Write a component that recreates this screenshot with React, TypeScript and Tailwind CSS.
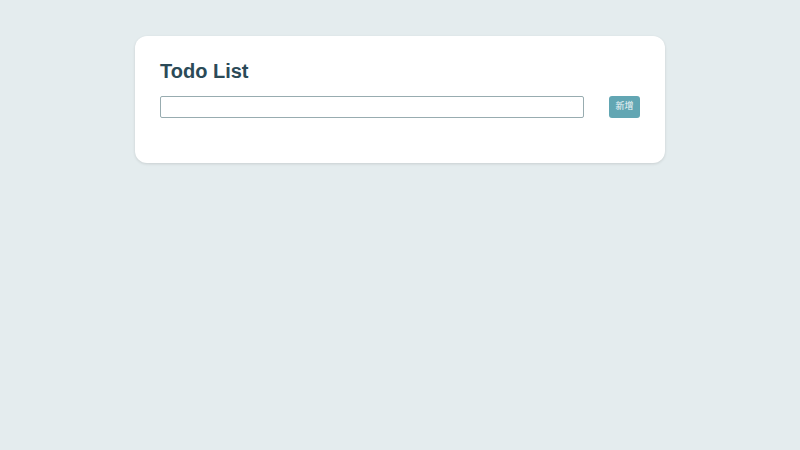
import React, { useState } from 'react';

const App: React.FC = () => {
  const [text, setText] = useState('');
  const [todos, setTodos] = useState<string[]>([]);

  const addTodo = () => {
    if (!text.trim()) return;
    setTodos((prev) => [...prev, text.trim()]);
    setText('');
  };

  return (
    <div
      className="min-h-screen bg-[#e4ecee] pt-9"
      style={{ fontFamily: '"Liberation Sans", "Noto Sans CJK SC", sans-serif' }}
    >
      <div className="mx-auto w-[530px] rounded-xl bg-white px-[25px] pt-[23px] pb-[45px] shadow-[0_1px_3px_rgba(0,0,0,0.12)]">
        <h1 className="text-[20px] leading-[24px] font-bold text-[#2b4a57]">Todo List</h1>
        <div className="mt-[13px] flex items-center gap-[25px]">
          <input
            value={text}
            onChange={(e) => setText(e.target.value)}
            className="h-[22px] flex-1 rounded-[2px] border border-[#98acb0] bg-white px-1 text-sm outline-none"
          />
          <button
            onClick={addTodo}
            className="h-[22px] w-[31px] rounded-[3px] bg-[#62a6b3] text-[9px] text-[#eef6f8]"
          >
            新增
          </button>
        </div>
        {todos.length > 0 && (
          <ul className="mt-3 space-y-1 text-sm text-[#2a4553]">
            {todos.map((t, i) => (
              <li key={i}>{t}</li>
            ))}
          </ul>
        )}
      </div>
    </div>
  );
};

export default App;
